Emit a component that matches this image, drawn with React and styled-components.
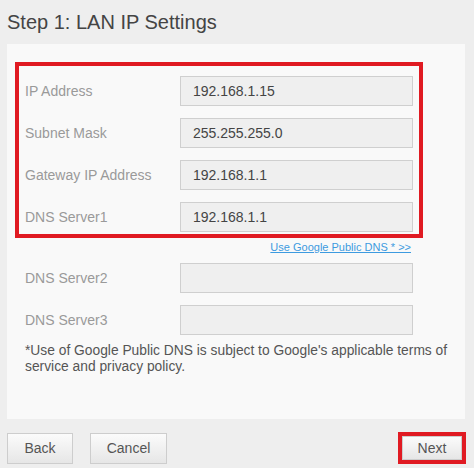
import React from "react";
import styled, { createGlobalStyle } from "styled-components";

const GlobalStyle = createGlobalStyle`
  html, body {
    margin: 0;
    padding: 0;
    background: #eeeeee;
    font-family: "Liberation Sans", Arial, sans-serif;
  }
`;

const Page = styled.div`
  width: 474px;
  height: 468px;
  padding: 0 9px 0 7px;
  box-sizing: border-box;
  display: flex;
  flex-direction: column;
`;

const Title = styled.h1`
  margin: 0;
  height: 44px;
  line-height: 44px;
  font-size: 20px;
  font-weight: normal;
  color: #444;
`;

const Panel = styled.div`
  height: 375px;
  background: #f9f9f9;
  padding: 18px 0 0 8px;
  box-sizing: border-box;
`;

const Highlight = styled.div`
  width: 408px;
  box-sizing: border-box;
  border: 4px solid #e01a22;
  padding: 10px 6px 2px;
  display: flex;
  flex-direction: column;
  gap: 12px;
`;

const Plain = styled.div`
  width: 408px;
  box-sizing: border-box;
  padding: 0 10px;
  display: flex;
  flex-direction: column;
  gap: 12px;
`;

const Row = styled.div`
  display: flex;
  align-items: center;
  height: 30px;
`;

const Label = styled.label`
  width: 155px;
  font-size: 14px;
  color: #9a9a9a;
`;

const Field = styled.div`
  width: 233px;
  height: 30px;
  box-sizing: border-box;
  border: 1px solid #cfcfcf;
  background: #efefef;
  padding-left: 12px;
  display: flex;
  align-items: center;
  font-size: 14px;
  color: #444;
`;

const LinkRow = styled.div`
  width: 408px;
  box-sizing: border-box;
  padding-right: 12px;
  text-align: right;
  line-height: 16px;
  margin-bottom: 8px;
`;

const DnsLink = styled.a`
  font-size: 11px;
  color: #3d9be0;
  text-decoration: underline;
`;

const Note = styled.p`
  margin: 8px 0 0 10px;
  width: 432px;
  font-size: 13.8px;
  line-height: 16px;
  color: #555;
`;

const Footer = styled.div`
  display: flex;
  align-items: center;
  margin-top: 13px;
  gap: 17px;
`;

const Button = styled.button`
  height: ${(p) => p.$h || 31}px;
  padding: 0;
  width: ${(p) => p.$w}px;
  box-sizing: border-box;
  border: 1px solid #cdcdcd;
  background: linear-gradient(#fbfbfb, #e6e6e6);
  font-family: "Liberation Sans", Arial, sans-serif;
  font-size: 14px;
  color: #555;
`;

const NextFrame = styled.div`
  margin-left: auto;
  margin-right: -1px;
  border: 4px solid #e01a22;
  display: flex;
`;

const fields = [
  ["IP Address", "192.168.1.15"],
  ["Subnet Mask", "255.255.255.0"],
  ["Gateway IP Address", "192.168.1.1"],
  ["DNS Server1", "192.168.1.1"],
];

const App = () => {
  return (
    <Page>
      <GlobalStyle />
      <Title>Step 1: LAN IP Settings</Title>
      <Panel>
        <Highlight>
          {fields.map(([label, value]) => (
            <Row key={label}>
              <Label>{label}</Label>
              <Field>{value}</Field>
            </Row>
          ))}
        </Highlight>
        <LinkRow>
          <DnsLink href="#">Use Google Public DNS * &gt;&gt;</DnsLink>
        </LinkRow>
        <Plain>
          <Row>
            <Label>DNS Server2</Label>
            <Field />
          </Row>
          <Row>
            <Label>DNS Server3</Label>
            <Field />
          </Row>
        </Plain>
        <Note>
          *Use of Google Public DNS is subject to Google's applicable terms of
          service and privacy policy.
        </Note>
      </Panel>
      <Footer>
        <Button $w={66}>Back</Button>
        <Button $w={77}>Cancel</Button>
        <NextFrame>
          <Button $w={60} $h={24}>Next</Button>
        </NextFrame>
      </Footer>
    </Page>
  );
};

export default App;
